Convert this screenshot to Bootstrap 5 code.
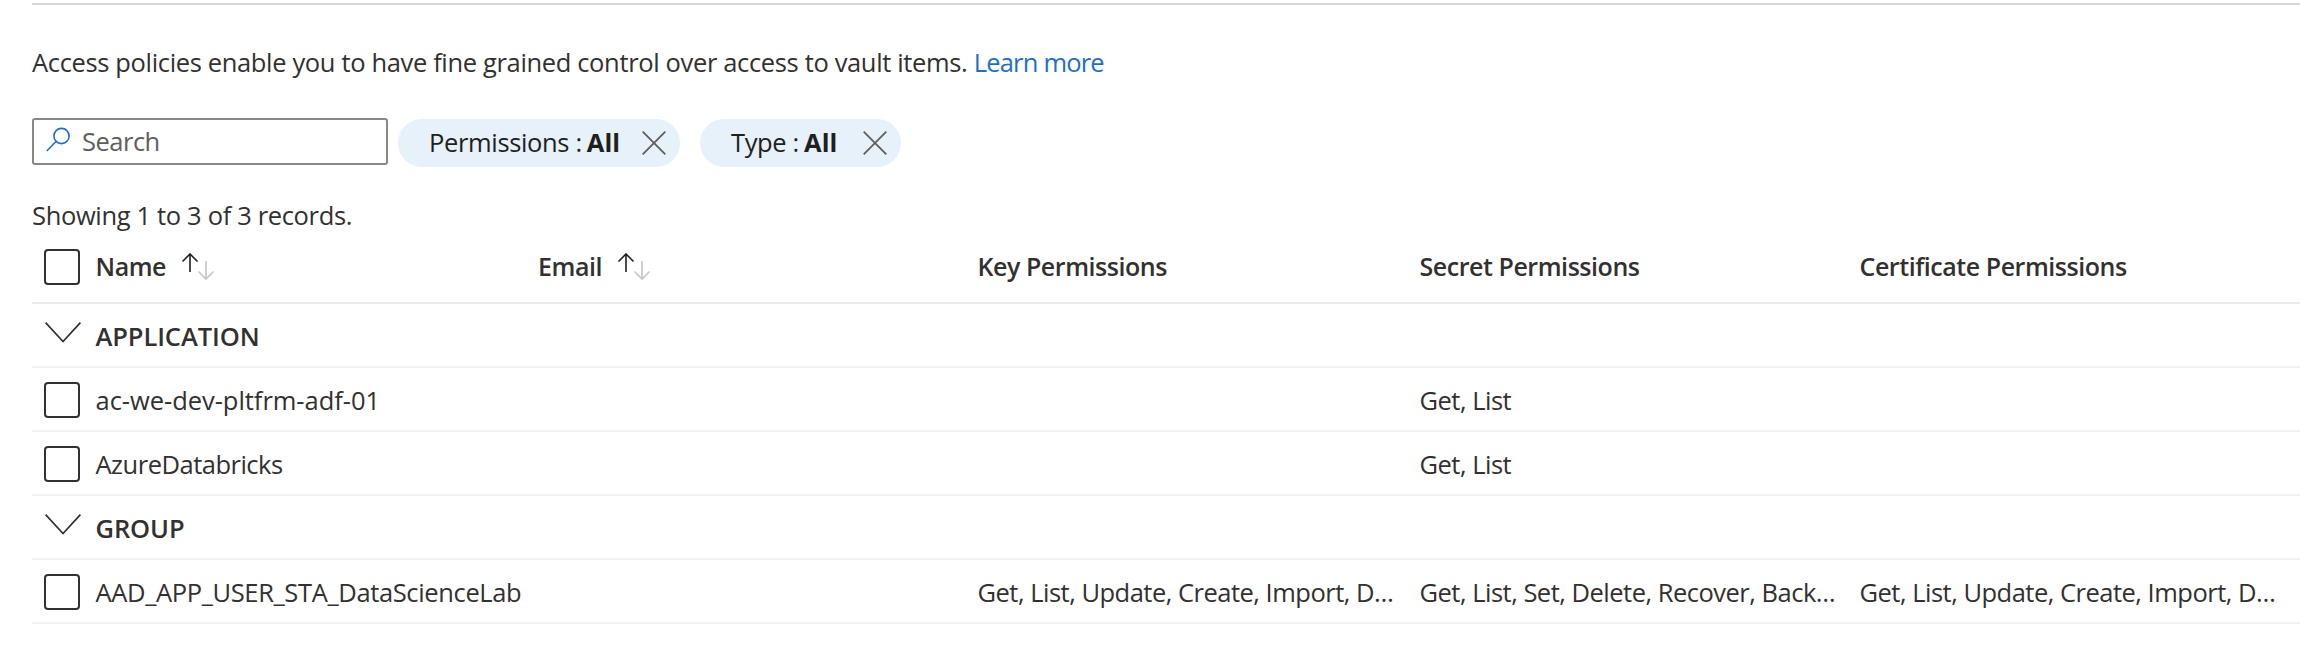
<!doctype html>
<html lang="en">
<head>
<meta charset="utf-8">
<title>Access policies</title>
<link rel="stylesheet" href="https://cdn.jsdelivr.net/npm/bootstrap@5.3.0/dist/css/bootstrap.min.css">
<style>
html,body{background:#fff;overflow:hidden}
body{font-family:"Open Sans","Noto Sans","Liberation Sans",sans-serif;font-size:25.5px;color:#323130;height:658px;width:2300px}
.page-wrap{padding:3px 0 0 32px}
.top-rule{height:2px;background:#d6d6d6}
.intro-text{margin:41px 0 0;line-height:32px;height:32px;letter-spacing:-.35px;color:#323130;white-space:nowrap}
.intro-text a{color:#1e6fcc;text-decoration:none;letter-spacing:-.8px}
.filter-bar{margin-top:39.500px;height:50px}
.search-box{width:356px;height:47px;border:2px solid #8a8886;border-radius:3px;padding-left:12px;color:#605e5c;letter-spacing:-.5px}
.search-box svg path,.search-box svg circle{stroke:#1e6fcc}
.search-box span{margin-left:10px}
.pill-chip{height:48px;border-radius:24px;background:#e6f1fa;color:#201f1e;margin-top:1px;letter-spacing:-.35px;padding-left:31px;padding-right:14px}
.chip-one{width:282px;margin-left:10px}
.chip-two{width:201px;margin-left:20px}
.pill-chip svg{margin-left:auto}
.pill-chip b{font-weight:700;margin-left:5px;letter-spacing:.1px}
.count-line{margin:31px 0 0;line-height:32px;height:32px;letter-spacing:-.34px;white-space:nowrap}
.grid-wrap{margin-top:8.500px}
.perm-table{table-layout:fixed;width:2268px;margin:0;--bs-table-color:#323130;--bs-table-border-color:#f3f2f1;color:#323130}
.perm-table th,.perm-table td{padding:0;height:64px;vertical-align:middle;border-bottom:2px solid #f3f2f1;letter-spacing:-.5px;white-space:nowrap;box-shadow:none}
.perm-table td{padding-top:3px}
.perm-table td.check-cell{padding-top:1px}
.perm-table thead th{border-bottom-color:#edebe9;font-weight:600;font-size:25px;letter-spacing:-.45px;padding-bottom:8px}
.perm-table td.group-name{font-weight:600;letter-spacing:-.1px}
.perm-table td.wide-name{letter-spacing:-.04px}
.perm-table td.long-name{letter-spacing:-.36px}
.check-cell{padding-left:11.5px!important}
.check-square{display:block;width:36px;height:36px;border:2.5px solid #323130;border-radius:4px}
.chevron-mark{display:block;margin-left:13px;margin-top:-8px}
.sort-mark{vertical-align:middle;margin-left:14px;margin-top:-2px}
</style>
</head>
<body>
<div class="page-wrap">
  <div class="top-rule"></div>
  <p class="intro-text">Access policies enable you to have fine grained control over access to vault items. <a href="#">Learn more</a></p>
  <div class="filter-bar d-flex align-items-start">
    <div class="search-box d-flex align-items-center">
      <svg width="26" height="28" viewBox="0 0 26 28" fill="none" stroke="#0f6cbd" stroke-width="1.6"><circle cx="15.5" cy="9" r="7.6"/><path d="M10 14.5 0.8 24"/></svg>
      <span>Search</span>
    </div>
    <div class="pill-chip chip-one d-flex align-items-center">
      <span>Permissions :<b>All</b></span>
      <svg width="24" height="24" viewBox="0 0 24 24" stroke="#605e5c" stroke-width="1.8" fill="none"><path d="M0.7 0.7 23.3 23.3M23.3 0.7 0.7 23.3"/></svg>
    </div>
    <div class="pill-chip chip-two d-flex align-items-center">
      <span>Type :<b>All</b></span>
      <svg width="24" height="24" viewBox="0 0 24 24" stroke="#605e5c" stroke-width="1.8" fill="none"><path d="M0.7 0.7 23.3 23.3M23.3 0.7 0.7 23.3"/></svg>
    </div>
  </div>
  <p class="count-line">Showing 1 to 3 of 3 records.</p>
  <div class="grid-wrap">
    <table class="table perm-table">
      <colgroup><col style="width:63.5px"><col style="width:442.5px"><col style="width:439.5px"><col style="width:442px"><col style="width:440px"><col style="width:440.500px"></colgroup>
      <thead>
        <tr>
          <th class="check-cell"><span class="check-square"></span></th>
          <th>Name<svg class="sort-mark" width="36" height="30" viewBox="0 0 36 30" fill="none"><path d="M10 1V19M2.5 8.5 10 1 17.500 8.500" stroke="#201f1e" stroke-width="1.6"/><path d="M26 8V26M18.500 18.500 26 26 33.500 18.500" stroke="#c8c6c4" stroke-width="1.6"/></svg></th>
          <th>Email<svg class="sort-mark" width="36" height="30" viewBox="0 0 36 30" fill="none"><path d="M10 1V19M2.5 8.5 10 1 17.500 8.500" stroke="#201f1e" stroke-width="1.6"/><path d="M26 8V26M18.500 18.500 26 26 33.500 18.500" stroke="#c8c6c4" stroke-width="1.6"/></svg></th>
          <th>Key Permissions</th>
          <th>Secret Permissions</th>
          <th>Certificate Permissions</th>
        </tr>
      </thead>
      <tbody>
        <tr>
          <td><svg class="chevron-mark" width="36" height="21" viewBox="0 0 36 21" fill="none" stroke="#323130" stroke-width="1.7"><path d="M0.600 0.600 18 19.500 35.400 0.600"/></svg></td>
          <td class="group-name" colspan="5">APPLICATION</td>
        </tr>
        <tr>
          <td class="check-cell"><span class="check-square"></span></td>
          <td class="wide-name">ac-we-dev-pltfrm-adf-01</td><td></td><td></td><td>Get, List</td><td></td>
        </tr>
        <tr>
          <td class="check-cell"><span class="check-square"></span></td>
          <td>AzureDatabricks</td><td></td><td></td><td>Get, List</td><td></td>
        </tr>
        <tr>
          <td><svg class="chevron-mark" width="36" height="21" viewBox="0 0 36 21" fill="none" stroke="#323130" stroke-width="1.7"><path d="M0.600 0.600 18 19.500 35.400 0.600"/></svg></td>
          <td class="group-name" colspan="5">GROUP</td>
        </tr>
        <tr>
          <td class="check-cell"><span class="check-square"></span></td>
          <td class="long-name">AAD_APP_USER_STA_DataScienceLab</td><td></td>
          <td>Get, List, Update, Create, Import, D…</td>
          <td>Get, List, Set, Delete, Recover, Back…</td>
          <td>Get, List, Update, Create, Import, D…</td>
        </tr>
      </tbody>
    </table>
  </div>
</div>
<script src="https://cdn.jsdelivr.net/npm/bootstrap@5.3.0/dist/js/bootstrap.bundle.min.js"></script>
</body>
</html>
